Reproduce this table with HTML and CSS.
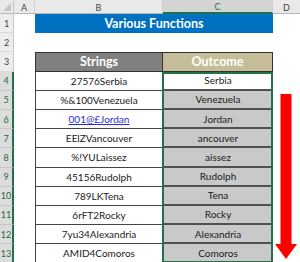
FILE: index.html
```html
<!DOCTYPE html>
<html>
<head>
<meta charset="utf-8">
<link rel="stylesheet" href="styles.css">
</head>
<body>
<div class="sheet">
  <div class="corner"><span class="tri"></span></div>
  <div class="ch">A</div><div class="ch">B</div><div class="ch ch-sel">C</div><div class="ch ch-last">D</div>

  <div class="rh">1</div><div></div><div class="title">Various Functions</div><div></div>
  <div class="rh">2</div><div></div><div></div><div></div><div></div>
  <div class="rh">3</div><div></div><div class="th th-b">Strings</div><div class="th th-c">Outcome</div><div></div>

  <div class="rh sel">4</div><div></div><div class="cb">27576Serbia</div><div class="cc active">Serbia</div><div></div>
  <div class="rh sel">5</div><div></div><div class="cb">%&amp;100Venezuela</div><div class="cc">Venezuela</div><div></div>
  <div class="rh sel">6</div><div></div><div class="cb"><span class="link">001@£Jordan</span></div><div class="cc">Jordan</div><div></div>
  <div class="rh sel">7</div><div></div><div class="cb">EElZVancouver</div><div class="cc">ancouver</div><div></div>
  <div class="rh sel">8</div><div></div><div class="cb">%!YULaissez</div><div class="cc">aissez</div><div></div>
  <div class="rh sel">9</div><div></div><div class="cb">45156Rudolph</div><div class="cc">Rudolph</div><div></div>
  <div class="rh sel">10</div><div></div><div class="cb">789LKTena</div><div class="cc">Tena</div><div></div>
  <div class="rh sel">11</div><div></div><div class="cb">6rFT2Rocky</div><div class="cc">Rocky</div><div></div>
  <div class="rh sel">12</div><div></div><div class="cb">7yu34Alexandria</div><div class="cc">Alexandria</div><div></div>
  <div class="rh sel">13</div><div></div><div class="cb">AMID4Comoros</div><div class="cc">Comoros</div><div></div>

  <div class="selection"></div>
</div>
<svg class="arrow" width="22" height="166" viewBox="0 0 22 166">
  <rect x="5.5" y="0" width="11" height="151" fill="#ff0000"/>
  <polygon points="0,150 22,150 11,165" fill="#ff0000"/>
</svg>
</body>
</html>
```

FILE: styles.css
```css
* { box-sizing: border-box; }
html, body { margin: 0; padding: 0; background: #fff; }
body { width: 300px; height: 262px; overflow: hidden; position: relative; font-family: Lato, "Open Sans", sans-serif; color: #1a1a1a; }

.sheet {
  position: relative;
  display: grid;
  grid-template-columns: 14px 21px 128px 110px 27px;
  grid-template-rows: 14px repeat(13, 19.2px);
}
.sheet > div { display: flex; align-items: center; justify-content: center; min-width: 0; }

.corner { background: #e9e9e9; border-right: 1px solid #c8c8c8; border-bottom: 1px solid #b8b8b8; position: relative; }
.tri { position: absolute; right: 2px; bottom: 2px; width: 0; height: 0; border-left: 8px solid transparent; border-bottom: 8px solid #c4c4c4; }

.ch { background: #e9e9e9; border-right: 1px solid #cfcfcf; border-bottom: 1px solid #b8b8b8; font-size: 9px; color: #444; padding-top: 1px; }
.ch-sel { background: #d4d4d4; color: #217346; border-bottom: 2px solid #217346; }
.ch-last { border-right: none; }

.rh { background: #ededed; border-right: 1px solid #c8c8c8; border-bottom: 1px solid #dadada; font-size: 9px; color: #444; }
.rh.sel { background: #dcdcdc; color: #1e6b40; border-right: 2px solid #217346; border-bottom-color: #c6c6c6; }

.title { grid-column: 3 / 5; background: #0070c0; color: #fff; font-weight: 700; font-size: 12.5px; }

.th { color: #fff; font-weight: 700; font-size: 12.5px; border-top: 1px solid #333; border-bottom: 1px solid #333; border-right: 1px solid #333; }
.th-b { background: #808080; border-left: 1px solid #333; }
.th-c { background: #c4bd97; }

.cb { font-size: 10px; border-left: 1px solid #444; border-right: 1px solid #444; border-bottom: 1px solid #444; }
.cc { font-size: 10px; background: #c9c9c9; border-bottom: 2px solid #505050; }
.cc.active { background: #fff; }

.link { color: #2b2bd9; text-decoration: underline; }

.selection { position: absolute; grid-column: 4 / 5; grid-row: 5 / 15; top: 0; bottom: 0; left: -1px; right: 0; border: 2px solid #217346; pointer-events: none; }

.arrow { position: absolute; left: 275px; top: 94px; }
```
